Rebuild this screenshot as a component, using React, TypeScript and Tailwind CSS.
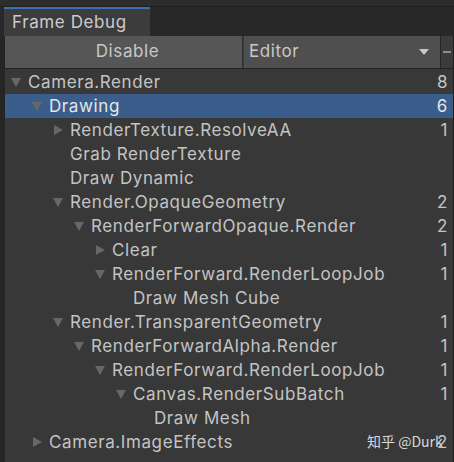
import React from 'react';

type Row = { label: string; depth: number; arrow?: 'down' | 'right'; count?: string; selected?: boolean };

const rows: Row[] = [
  { label: 'Camera.Render', depth: 0, arrow: 'down', count: '8' },
  { label: 'Drawing', depth: 1, arrow: 'down', count: '6', selected: true },
  { label: 'RenderTexture.ResolveAA', depth: 2, arrow: 'right', count: '1' },
  { label: 'Grab RenderTexture', depth: 2 },
  { label: 'Draw Dynamic', depth: 2 },
  { label: 'Render.OpaqueGeometry', depth: 2, arrow: 'down', count: '2' },
  { label: 'RenderForwardOpaque.Render', depth: 3, arrow: 'down', count: '2' },
  { label: 'Clear', depth: 4, arrow: 'right', count: '1' },
  { label: 'RenderForward.RenderLoopJob', depth: 4, arrow: 'down', count: '1' },
  { label: 'Draw Mesh Cube', depth: 5 },
  { label: 'Render.TransparentGeometry', depth: 2, arrow: 'down', count: '1' },
  { label: 'RenderForwardAlpha.Render', depth: 3, arrow: 'down', count: '1' },
  { label: 'RenderForward.RenderLoopJob', depth: 4, arrow: 'down', count: '1' },
  { label: 'Canvas.RenderSubBatch', depth: 5, arrow: 'down', count: '1' },
  { label: 'Draw Mesh', depth: 6 },
  { label: 'Camera.ImageEffects', depth: 1, arrow: 'right', count: '2' },
];

const Arrow = ({ dir }: { dir: 'down' | 'right' }) =>
  dir === 'down' ? (
    <svg width="12" height="12" viewBox="0 0 12 12" className="shrink-0">
      <path d="M1 2 L11 2 L6 11 Z" fill="#676767" />
    </svg>
  ) : (
    <svg width="12" height="12" viewBox="0 0 12 12" className="shrink-0">
      <path d="M2 1 L11 6 L2 11 Z" fill="#676767" />
    </svg>
  );

const pad = ['pl-[5px]', 'pl-[26px]', 'pl-[47px]', 'pl-[68px]', 'pl-[89px]', 'pl-[110px]', 'pl-[131px]'];

export default function App() {
  return (
    <div className="relative w-[454px] h-[462px] bg-[#262626] overflow-hidden flex flex-col font-['Inter','Liberation_Sans',sans-serif] text-[17px] tracking-[0.6px] text-[#c4c4c4]">
      <div className="h-[7px] bg-[#2d2d2d] border-b border-[#1f1f1f]" />
      {/* tab bar */}
      <div className="h-[29px] flex pl-[4px] bg-[#282828]">
        <div className="w-[146px] bg-[#3c3c3c] border-t-2 border-[#3a72b0] pl-[8px] flex items-center leading-none text-[#cbcbcb]">
          Frame Debug
        </div>
      </div>
      <div className="flex-1 flex pl-[4px]">
        <div className="flex-1 flex flex-col bg-[#383838] border-l border-[#232323] border-r border-r-[#1e1e1e]">
          {/* toolbar */}
          <div className="h-[33px] flex bg-[#3c3c3c] border-b border-[#232323]">
            <div className="w-[238px] bg-[#565656] border-r border-[#2e2e2e] flex items-center justify-center text-[#c8c8c8] pl-[8px]">
              Disable
            </div>
            <div className="w-[197px] ml-[1px] bg-[#4f4f4f] border-r border-[#262626] flex items-center justify-between pl-[5px] pr-[10px] text-[#c8c8c8]">
              <span>Editor</span>
              <svg width="12" height="8" viewBox="0 0 12 8">
                <path d="M1 1 L11 1 L6 7 Z" fill="#c8c8c8" />
              </svg>
            </div>
            <div className="flex-1 flex items-center justify-center">
              <div className="w-[8px] h-[2px] bg-[#8a8a8a]" />
            </div>
          </div>
          {/* tree */}
          <div className="flex flex-col pt-[1px]">
            {rows.map((r, i) => (
              <div
                key={i}
                className={`h-[24px] flex items-center pr-[5px] ${pad[r.depth]} ${r.selected ? 'bg-[#3b5d8c] text-[#e6e6e6]' : ''}`}
              >
                <div className="w-[18px] shrink-0 flex items-center">{r.arrow && <Arrow dir={r.arrow} />}</div>
                <span className="flex-1 whitespace-nowrap leading-none">{r.label}</span>
                {r.count && <span className="leading-none">{r.count}</span>}
              </div>
            ))}
          </div>
        </div>
      </div>
      <div className="absolute left-[367px] top-[434px] whitespace-nowrap tracking-normal text-[14px] text-[#d8d8d8] font-['Noto_Sans_CJK_SC',sans-serif] leading-none">
        知乎 @Durk
      </div>
    </div>
  );
}
